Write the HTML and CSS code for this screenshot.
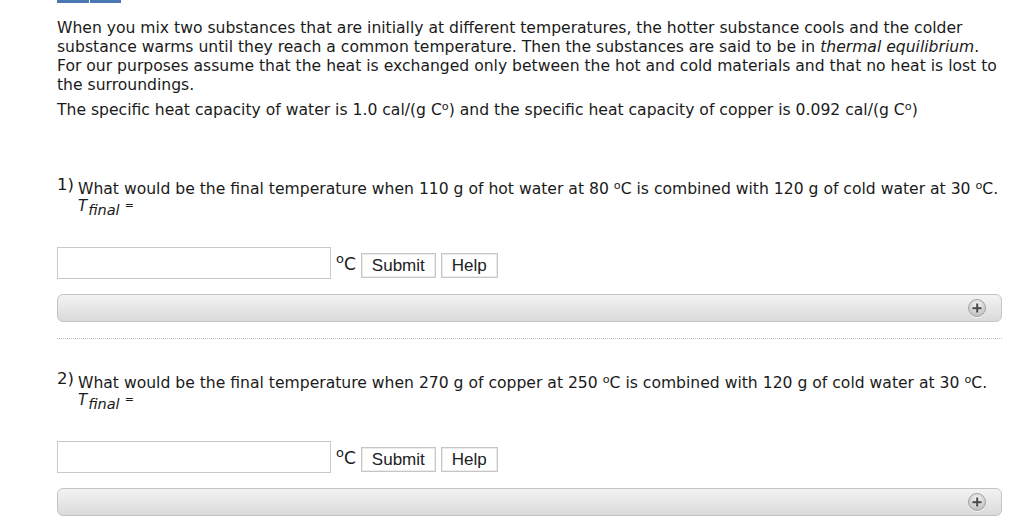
FILE: index.html
```html
<!DOCTYPE html>
<html>
<head>
<meta charset="utf-8">
<link rel="stylesheet" href="styles.css">
</head>
<body>
<div class="page">
  <div class="tab"><span></span><span></span></div>

  <div class="intro">
    <p>When you mix two substances that are initially at different temperatures, the hotter substance cools and the colder substance warms until they reach a common temperature. Then the substances are said to be in <i>thermal equilibrium</i>. For our purposes assume that the heat is exchanged only between the hot and cold materials and that no heat is lost to the surroundings.</p>
    <p class="second">The specific heat capacity of water is 1.0 cal/(g C<sup>o</sup>) and the specific heat capacity of copper is 0.092 cal/(g C<sup>o</sup>)</p>
  </div>

  <div class="question q1">
    <div class="qline"><span class="num">1)</span><span class="qtext">What would be the final temperature when 110 g of hot water at 80 <sup>o</sup>C is combined with 120 g of cold water at 30 <sup>o</sup>C.</span></div>
    <div class="tfinal"><i class="T">T</i><i class="sub">final</i> <span class="eq">=</span></div>
    <div class="answer">
      <input class="field" type="text">
      <span class="unit"><sup>o</sup>C</span>
      <button class="btn">Submit</button>
      <button class="btn">Help</button>
    </div>
    <div class="bar"><span class="plus"></span></div>
  </div>

  <div class="divider"></div>

  <div class="question q2">
    <div class="qline"><span class="num">2)</span><span class="qtext">What would be the final temperature when 270 g of copper at 250 <sup>o</sup>C is combined with 120 g of cold water at 30 <sup>o</sup>C.</span></div>
    <div class="tfinal"><i class="T">T</i><i class="sub">final</i> <span class="eq">=</span></div>
    <div class="answer">
      <input class="field" type="text">
      <span class="unit"><sup>o</sup>C</span>
      <button class="btn">Submit</button>
      <button class="btn">Help</button>
    </div>
    <div class="bar"><span class="plus"></span></div>
  </div>
</div>
</body>
</html>
```
FILE: styles.css
```css
html, body {
  margin: 0;
  padding: 0;
  background: #fff;
}
body {
  font-family: "DejaVu Sans", Verdana, sans-serif;
  font-size: 15.6px;
  color: #1a1a1a;
  overflow: hidden;
}
.page {
  width: 945px;
  margin-left: 57px;
}
.tab {
  display: flex;
  gap: 1px;
  width: 64px;
  height: 3px;
}
.tab span {
  flex: 1;
  background: #4a78b2;
}
.intro {
  padding-top: 16px;
}
.intro p {
  margin: 0;
  line-height: 19px;
}
.intro p.second {
  margin-top: 6px;
}
sup {
  font-size: 0.72em;
  line-height: 0;
  vertical-align: 0.45em;
}
.q1 {
  margin-top: 60px;
}
.q2 {
  margin-top: 35px;
}
.qline {
  display: flex;
  align-items: flex-start;
  white-space: nowrap;
  line-height: 19px;
}
.num {
  font-size: 16.5px;
  width: 21px;
  margin-top: -5px;
  flex: none;
}
.qtext {
  flex: none;
}
.tfinal {
  margin-left: 21px;
  margin-top: -2px;
  height: 20px;
  line-height: 18px;
}
.tfinal .T {
  font-size: 15px;
}
.tfinal .sub {
  font-size: 14.5px;
  position: relative;
  top: 4px;
  margin-left: 1px;
}
.tfinal .eq {
  font-size: 11px;
  position: relative;
  top: -2px;
}
.answer {
  display: flex;
  align-items: flex-start;
  margin-top: 30px;
  height: 32px;
}
.field {
  box-sizing: border-box;
  width: 274px;
  height: 32px;
  margin: 0;
  border: 1px solid #c9c9c9;
  background: #fff;
  padding: 0 6px;
  flex: none;
}
.unit {
  margin: 6.5px 5px 0 5px;
  font-size: 17px;
  line-height: 20px;
}
.unit sup {
  font-size: 13px;
  vertical-align: 7.5px;
}
.btn {
  box-sizing: border-box;
  height: 25px;
  margin: 6px 5px 0 0;
  padding: 0 10px;
  background: #fff;
  border: 1px solid #c6c6c6;
  box-shadow: inset 0 0 0 1px #ececec;
  font-family: "Liberation Sans", Arial, sans-serif;
  font-size: 17px;
  line-height: 22px;
  color: #222;
  border-radius: 0;
}
.bar {
  box-sizing: border-box;
  margin-top: 15px;
  height: 28px;
  border: 1px solid #c4c4c4;
  border-radius: 6px;
  background: linear-gradient(#f3f3f3, #dadada);
  display: flex;
  align-items: center;
  justify-content: flex-end;
  padding-right: 15px;
}
.plus {
  position: relative;
  box-sizing: border-box;
  width: 18px;
  height: 18px;
  border-radius: 50%;
  border: 1px solid #a4a4a4;
  background: radial-gradient(circle at 50% 30%, #f4f4f4, #c4c4c4 75%, #b8b8b8);
  box-shadow: 0 1px 0 #f6f6f6;
}
.plus::before, .plus::after {
  content: "";
  position: absolute;
  background: #4a4a4a;
  left: 50%;
  top: 50%;
  transform: translate(-50%, -50%);
}
.plus::before {
  width: 9px;
  height: 1.6px;
}
.plus::after {
  width: 1.6px;
  height: 9px;
}
.divider {
  margin-top: 16px;
  border-top: 1px dotted #bdbdbd;
}
```
